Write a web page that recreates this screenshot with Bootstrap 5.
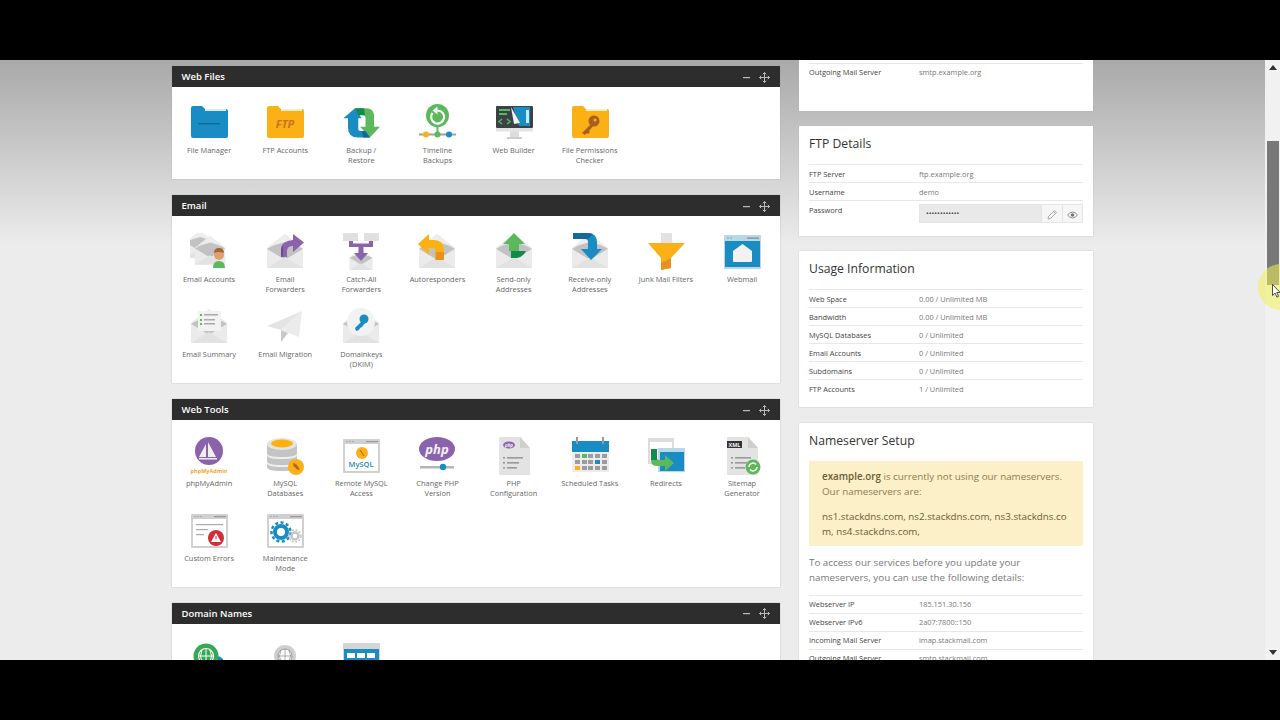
<!DOCTYPE html>
<html lang="en">
  <head>
    <meta charset="UTF-8" />
    <meta name="viewport" content="width=device-width, initial-scale=1.0" />
    <title>Control Panel</title>
    <link href="https://cdn.jsdelivr.net/npm/bootstrap@5.3.0/dist/css/bootstrap.min.css" rel="stylesheet" />
    <style>
      html, body { height: 100%; overflow: hidden; background: #000; }
      body { font-family: "Open Sans", "Liberation Sans", sans-serif; }
      .stage {
        height: 600px;
        margin-top: 60px;
        overflow: hidden;
        position: relative;
        background: linear-gradient(#a9a9a9 0, #ececec 185px, #ececec 100%);
      }
      .left-col { width: 608px; margin-left: 172px; padding-top: 6px; }
      .right-col { width: 294px; margin-left: 19px; }
      .panel { border: 0; border-radius: 0; margin-bottom: 16px; box-shadow: 0 0 1px #999; }
      .panel .card-header {
        height: 21px;
        padding: 1px 10px 0 9.5px;
        background: #2d2d2d;
        border: 0;
        border-radius: 0;
        color: #fff;
        font-size: 9.5px;
        font-weight: 600;
      }
      .tool-grid {
        display: grid;
        grid-template-columns: repeat(8, 76.15px);
        row-gap: 13.5px;
        margin-left: -1px;
        padding: 17px 0 14.3px;
      }
      .tool { height: 61px; color: #666; font-size: 7.4px; line-height: 10px; }
      .tool svg { display: block; width: 38px; height: 38px; margin: 0 auto 3px; }
      .side { border: 0; border-radius: 0; margin-bottom: 15px; box-shadow: 0 0 1px #aaa; padding: 9px 10px 0; }
      .side h5 { font-size: 12.2px; line-height: 17px; font-weight: 400; color: #333; margin: 0 0 12.5px; }
      .info { margin: 0; font-size: 7.4px; line-height: 10px; table-layout: fixed; }
      .info td { padding: 3.2px 0 3.8px; border-top: 1px solid #e8e8e8; border-bottom: 0; background: transparent; box-shadow: none; }
      .info td:first-child { width: 110px; color: #444; }
      .info td:last-child { color: #777; }
      .first-side { margin-top: -1px; padding-bottom: 30px; }
      .first-side .info { margin-top: 4px; }
      .usage-side { padding-bottom: 9.5px; margin-bottom: 16px; }
      .info td.pass-cell { padding: 2.5px 0 13px; }
      .pass { height: 19px; flex-wrap: nowrap; }
      .pass .form-control {
        height: 19px;
        min-height: 0;
        padding: 0 6px;
        font-size: 7.4px;
        border-radius: 0;
        border-color: #e4e4e4;
        background: #e9e9e9;
        color: #444;
      }
      .pass .btn {
        width: 21.5px;
        height: 19px;
        padding: 0;
        border-radius: 0;
        border-color: #e4e4e4;
        background: #f6f6f6;
        line-height: 1;
      }
      .ns-alert {
        margin: 0 0 8.5px;
        padding: 7.5px 13px;
        border: 0;
        border-radius: 1px;
        background: #fcf0c9;
        color: #8d7a52;
        font-size: 9.8px;
        line-height: 15px;
      }
      .ns-alert b { font-weight: 600; color: #6b5a36; }
      .ns-list { word-break: break-all; color: #6b5a36; margin: 10px 0 0; }
      .ns-note { color: #777; font-size: 9.8px; line-height: 15px; margin: 0 0 10px; }
      .scrollbar { position: absolute; top: 0; right: 0; bottom: 0; width: 15px; background: #f1f1f1; }
      .scroll-thumb { margin: 81px 1px 0 2px; height: 144px; background: #787878; }
      .scroll-up, .scroll-down { position: absolute; left: 4px; width: 0; height: 0; border-left: 4px solid transparent; border-right: 4px solid transparent; }
      .scroll-up { top: 5px; border-bottom: 5px solid #333; }
      .scroll-down { bottom: 5px; border-top: 5px solid #333; }
      .cursor-glow { position: absolute; left: 1258px; top: 204px; width: 46px; height: 46px; border-radius: 50%; background: rgba(240, 240, 90, 0.55); }
      .cursor { position: absolute; left: 1272px; top: 224px; width: 9px; height: 14px; }
      .ico-text { font-family: "Open Sans", "Liberation Sans", sans-serif; }
    </style>
  </head>
  <body>
    <svg width="0" height="0" class="position-absolute">
      <defs>
        <symbol id="env" viewBox="0 0 38 38">
          <polygon points="1,15 19,1 37,15 37,35 1,35" fill="#e8e8e8" />
          <polygon points="1,16 19,6 37,16 19,27" fill="#c2c2c2" />
          <polygon points="5,13 19,2 33,13 19,9" fill="#eeeeee" />
          <polygon points="1,16 19,27 37,16 37,35 1,35" fill="#ebebeb" />
          <polygon points="1,35 19,24 37,35" fill="#e2e2e2" />
        </symbol>
        <symbol id="win" viewBox="0 0 38 38">
          <rect x="1" y="2" width="37" height="34" rx="1" fill="#d0d0d0" />
          <rect x="3" y="7" width="33" height="27" fill="#fff" />
          <circle cx="5" cy="4.500" r=".7" fill="#999" /><circle cx="8" cy="4.500" r=".7" fill="#999" /><circle cx="11" cy="4.500" r=".7" fill="#999" />
          <rect x="24" y="4" width="12" height="1.200" fill="#999" />
        </symbol>
        <symbol id="doc" viewBox="0 0 38 38">
          <polygon points="4,0 25,0 35,11 35,38 4,38" fill="#e3e3e3" />
          <polygon points="25,0 35,11 25,11" fill="#cfcfcf" />
          <g fill="#999"><rect x="8" y="20" width="2" height="1.600" /><rect x="12" y="20" width="16" height="1.600" /><rect x="8" y="25" width="2" height="1.600" /><rect x="12" y="25" width="12" height="1.600" /><rect x="8" y="30" width="2" height="1.600" /><rect x="12" y="30" width="10" height="1.600" /></g>
        </symbol>
        <symbol id="panel-tools" viewBox="0 0 31 11">
          <rect x="4" y="5" width="7" height="1.200" fill="#bbb" />
          <path d="M20.500 5.500h10M25.500.5v10M23.800 2.200l1.700-1.700 1.700 1.700M23.800 8.800l1.700 1.700 1.700-1.700M22.200 3.800l-1.700 1.700 1.700 1.700M28.800 3.800l1.700 1.700-1.700 1.700" stroke="#bbb" stroke-width="1" fill="none" />
        </symbol>
      </defs>
    </svg>

    <div class="stage d-flex">
      <div class="left-col flex-shrink-0">

        <div class="card panel">
          <div class="card-header d-flex align-items-center justify-content-between">
            <span>Web Files</span>
            <svg width="31" height="11"><use href="#panel-tools" /></svg>
          </div>
          <div class="card-body p-0 bg-white">
            <div class="tool-grid">
              <div class="tool text-center">
                <svg viewBox="0 0 38 38"><path d="M1 4q0-2 2-2h9l3 3h21q2 0 2 2v25q0 2-2 2H3q-2 0-2-2z" fill="#1a8cc4" /><rect x="15" y="5" width="21" height="2" fill="#d8ecf6" /><rect x="8" y="19" width="22" height="1.400" fill="#12688f" /></svg>
                File Manager
              </div>
              <div class="tool text-center">
                <svg viewBox="0 0 38 38"><path d="M1 4q0-2 2-2h9l3 3h21q2 0 2 2v25q0 2-2 2H3q-2 0-2-2z" fill="#fbb116" /><rect x="15" y="5" width="21" height="2" fill="#fdeec8" /><text class="ico-text" x="19" y="24" text-anchor="middle" font-size="11" font-weight="700" font-style="italic" fill="#c4741c">FTP</text></svg>
                FTP Accounts
              </div>
              <div class="tool text-center">
                <svg viewBox="0 0 38 38"><path d="M1.300 14.300L13 4.300l6.700 10h-3.400V25q0 2 3 2H28v6.500H16q-10 0-10-10V14.300z" fill="#1a8cc4" /><path d="M13 4.300h11q8 0 8 8v10.400h6L28 33.300 18 22.700h5.500V14q0-3-3-3H16z" fill="#5cb85c" /><path d="M13 4.300h9l1 7h-7z" fill="#128a4c" /><path d="M20 27h3.500L28 33.500h-7z" fill="#136a96" /></svg>
                Backup /<br />Restore
              </div>
              <div class="tool text-center">
                <svg viewBox="0 0 38 38"><circle cx="19.500" cy="11.500" r="11.500" fill="#5cb85c" /><path d="M14.500 9a6.500 6.500 0 1 0 5-2.500" stroke="#fff" stroke-width="2.200" fill="none" /><polygon points="19.500,2.500 19.500,10.500 14.500,6.500" fill="#fff" /><rect x="18.500" y="22" width="2" height="9" fill="#5cb85c" /><rect x="1" y="29.500" width="37" height="2" fill="#a0a0a0" /><circle cx="8" cy="30.500" r="3" fill="#fbb116" /><circle cx="19.500" cy="30.500" r="3" fill="#5cb85c" /><circle cx="31" cy="30.500" r="3" fill="#1a8cc4" /></svg>
                Timeline<br />Backups
              </div>
              <div class="tool text-center">
                <svg viewBox="0 0 38 38"><rect x="15" y="26" width="9" height="8" fill="#ddd" /><rect x="12" y="33" width="15" height="2" fill="#ccc" /><rect x="1" y="2" width="37" height="22" rx="1" fill="#3b4144" /><rect x="1" y="24" width="37" height="3.500" fill="#e4e4e4" /><polygon points="18,3 35,3 35,22 24,22" fill="#1a8cc4" /><polygon points="16,3 25,19 19,20" fill="#f2f2f2" /><rect x="31" y="6" width="3" height="13" fill="#cfe7f3" /><g fill="#5cb85c"><rect x="4" y="5" width="11" height="2" /><rect x="4" y="9" width="8" height="2" /></g><path d="M7 15l-3 2.500 3 2.500M12 15l3 2.500-3 2.500" stroke="#5cb85c" stroke-width="1.500" fill="none" /></svg>
                Web Builder
              </div>
              <div class="tool text-center">
                <svg viewBox="0 0 38 38"><path d="M1 4q0-2 2-2h9l3 3h21q2 0 2 2v25q0 2-2 2H3q-2 0-2-2z" fill="#fbb116" /><rect x="15" y="5" width="21" height="2" fill="#fdeec8" /><circle cx="23" cy="17" r="5.500" fill="#a85f20" /><circle cx="24" cy="16" r="1.500" fill="#fbb116" /><path d="M20 20L11 29l3 2 2-2 1 1 2-2-1-1 4-5z" fill="#a85f20" /></svg>
                File Permissions<br />Checker
              </div>
            </div>
          </div>
        </div>

        <div class="card panel">
          <div class="card-header d-flex align-items-center justify-content-between">
            <span>Email</span>
            <svg width="31" height="11"><use href="#panel-tools" /></svg>
          </div>
          <div class="card-body p-0 bg-white">
            <div class="tool-grid">
              <div class="tool text-center">
                <svg viewBox="0 0 38 38"><use href="#env" x="-5" y="-3" width="30" height="30" /><use href="#env" x="4" y="2" width="32" height="32" /><circle cx="29" cy="22" r="5" fill="#e0a070" /><path d="M24 20q0-5 5-5t5 5q-5-2-10 0z" fill="#a2682f" /><path d="M23 35q0-7 6-7t6 7z" fill="#5cb85c" /></svg>
                Email Accounts
              </div>
              <div class="tool text-center">
                <svg viewBox="0 0 38 38"><use href="#env" /><path d="M15 24v-7q0-9 12-10V1l11 8.500L27 19v-6q-6 0-6 5v6z" fill="#8b63ad" /><path d="M15 24v-7q0-3 2-5v11z" fill="#6c4a8c" /></svg>
                Email<br />Forwarders
              </div>
              <div class="tool text-center">
                <svg viewBox="0 0 38 38"><rect x="1" y="0" width="15" height="8" fill="#e0e0e0" /><rect x="22" y="0" width="15" height="8" fill="#e0e0e0" /><use href="#env" x="7" y="15" width="24" height="24" /><g fill="#8b63ad"><rect x="7" y="8" width="4" height="6" /><rect x="27" y="8" width="4" height="6" /><rect x="7" y="10.500" width="24" height="3.500" /><rect x="16.500" y="14" width="5" height="6" /><polygon points="12,20 26,20 19,28" /></g></svg>
                Catch-All<br />Forwarders
              </div>
              <div class="tool text-center">
                <svg viewBox="0 0 38 38"><use href="#env" /><path d="M0 11L11 1v6h5q10 0 10 10v10h-9V17q0-2-2-2h-4v7z" fill="#fbb116" /><rect x="18" y="19" width="8" height="8" fill="#e8901f" /></svg>
                Autoresponders
              </div>
              <div class="tool text-center">
                <svg viewBox="0 0 38 38"><use href="#env" /><path d="M19 0l11 11h-6v7h-10v-7H8z" fill="#5cb85c" /><path d="M16 18h15q-3 6-9 7h-6z" fill="#128a4c" /></svg>
                Send-only<br />Addresses
              </div>
              <div class="tool text-center">
                <svg viewBox="0 0 38 38"><use href="#env" /><path d="M2 0h14q10 0 10 9v7h5L20 27 10 16h7V9q0-3-3-3H2z" fill="#1a8cc4" /><path d="M2 0h14q3 0 6 1l-5 5H2z" fill="#136a96" /></svg>
                Receive-only<br />Addresses
              </div>
              <div class="tool text-center">
                <svg viewBox="0 0 38 38"><rect x="14" y="0" width="11" height="12" fill="#e2e2e2" /><polygon points="1,10 38,10 24,25 24,35 14,37 14,25" fill="#fbb116" /><polygon points="14,37 24,35 24,25 14,30" fill="#e8901f" /></svg>
                Junk Mail Filters
              </div>
              <div class="tool text-center">
                <svg viewBox="0 0 38 38"><rect x="1" y="2" width="37" height="34" rx="1" fill="#b9d7e5" /><rect x="2" y="8" width="35" height="26" fill="#1a8cc4" /><circle cx="5" cy="5" r=".7" fill="#888" /><circle cx="8" cy="5" r=".7" fill="#888" /><rect x="24" y="4.500" width="12" height="1.200" fill="#888" /><path d="M10 18l9.500-7 9.500 7v10q0 1-1 1H11q-1 0-1-1z" fill="#f2f2f2" /></svg>
                Webmail
              </div>
              <div class="tool text-center">
                <svg viewBox="0 0 38 38"><use href="#env" /><rect x="8" y="3" width="23" height="20" rx="1" fill="#f2f2f2" /><g fill="#5cb85c"><rect x="10" y="6" width="2" height="2" /><rect x="10" y="11" width="2" height="2" /><rect x="10" y="15" width="2" height="2" /></g><g fill="#aaa"><rect x="14" y="6" width="14" height="1.500" /><rect x="14" y="11" width="11" height="1.500" /><rect x="14" y="15" width="11" height="1.500" /></g></svg>
                Email Summary
              </div>
              <div class="tool text-center">
                <svg viewBox="0 0 38 38"><polygon points="1,18 36,3 15,22" fill="#e4e4e4" /><polygon points="36,3 15,22 33,29" fill="#ebebeb" /><polygon points="15,22 15,34 22,25" fill="#c8c8c8" /></svg>
                Email Migration
              </div>
              <div class="tool text-center">
                <svg viewBox="0 0 38 38"><use href="#env" /><circle cx="19" cy="14" r="14" fill="#f2f2f2" /><circle cx="22" cy="11" r="4.500" fill="#1a8cc4" /><path d="M20 13l-7 7 1 3 3-1 1-2 2-1 3-4z" fill="#1a8cc4" /></svg>
                Domainkeys<br />(DKIM)
              </div>
            </div>
          </div>
        </div>

        <div class="card panel">
          <div class="card-header d-flex align-items-center justify-content-between">
            <span>Web Tools</span>
            <svg width="31" height="11"><use href="#panel-tools" /></svg>
          </div>
          <div class="card-body p-0 bg-white">
            <div class="tool-grid">
              <div class="tool text-center">
                <svg viewBox="0 0 38 38"><circle cx="19" cy="14" r="14" fill="#8b63ad" /><path d="M9 20l7-13v13zM18 5l8 15h-8z" fill="#eee" /><rect x="9" y="21" width="18" height="1.500" fill="#eee" /><text class="ico-text" x="19" y="36" text-anchor="middle" font-size="5.500" font-weight="700" fill="#f0a81e">phpMyAdmin</text></svg>
                phpMyAdmin
              </div>
              <div class="tool text-center">
                <svg viewBox="0 0 38 38"><path d="M1 7v23q0 4 15 4t15-4V7z" fill="#c4c4c4" /><path d="M1 16q0 4 15 4t15-4v2q0 4-15 4T1 18zM1 24q0 4 15 4t15-4v2q0 4-15 4T1 26z" fill="#efefef" /><ellipse cx="16" cy="7" rx="15" ry="6" fill="#e4e4e4" /><ellipse cx="16" cy="6.500" rx="11" ry="4" fill="#fbb116" /><circle cx="30" cy="30" r="8" fill="#fbb116" /><path d="M27 26q4 0 7 7-4 0-5-3-2 0-2-4z" fill="#b06a20" /></svg>
                MySQL<br />Databases
              </div>
              <div class="tool text-center">
                <svg viewBox="0 0 38 38"><use href="#win" /><circle cx="20" cy="16" r="6" fill="#fbb116" /><path d="M18 13l4 6" stroke="#a85f20" stroke-width="1" /><text class="ico-text" x="19" y="30" text-anchor="middle" font-size="7.500" font-weight="600" fill="#2f88ad">MySQL</text></svg>
                Remote MySQL<br />Access
              </div>
              <div class="tool text-center">
                <svg viewBox="0 0 38 38"><ellipse cx="19" cy="12" rx="18" ry="12" fill="#8b63ad" /><text class="ico-text" x="19" y="17" text-anchor="middle" font-size="13" font-weight="700" font-style="italic" fill="#f2f2f2">php</text><rect x="2" y="29" width="34" height="2.500" fill="#b5b5b5" /><circle cx="25" cy="30" r="3.200" fill="#1a8cc4" /></svg>
                Change PHP<br />Version
              </div>
              <div class="tool text-center">
                <svg viewBox="0 0 38 38"><use href="#doc" /><ellipse cx="14" cy="8" rx="6" ry="3.500" fill="#8b63ad" /><text class="ico-text" x="14" y="9.800" text-anchor="middle" font-size="4.500" font-weight="700" font-style="italic" fill="#eee">php</text></svg>
                PHP<br />Configuration
              </div>
              <div class="tool text-center">
                <svg viewBox="0 0 38 38"><rect x="1" y="4" width="37" height="31" fill="#ececec" /><rect x="1" y="4" width="37" height="11" fill="#1a8cc4" /><rect x="5" y="0" width="2" height="7" fill="#999" /><rect x="31" y="0" width="2" height="7" fill="#999" /><g fill="#9c9c9c"><rect x="4" y="17" width="5" height="4" /><rect x="17" y="17" width="5" height="4" /><rect x="24" y="17" width="5" height="4" /><rect x="31" y="17" width="5" height="4" /><rect x="4" y="23" width="5" height="4" /><rect x="11" y="23" width="5" height="4" /><rect x="17" y="23" width="5" height="4" /><rect x="31" y="23" width="5" height="4" /><rect x="11" y="29" width="5" height="4" /><rect x="17" y="29" width="5" height="4" /><rect x="24" y="29" width="5" height="4" /><rect x="31" y="29" width="5" height="4" /></g><rect x="11" y="17" width="5" height="4" fill="#5cb85c" /><rect x="24" y="23" width="5" height="4" fill="#1a8cc4" /><rect x="4" y="29" width="5" height="4" fill="#fbb116" /></svg>
                Scheduled Tasks
              </div>
              <div class="tool text-center">
                <svg viewBox="0 0 38 38"><rect x="1" y="1" width="26" height="26" fill="#dcdcdc" /><rect x="3" y="5" width="22" height="20" fill="#fff" /><rect x="11" y="11" width="27" height="24" fill="#b9d7e5" /><rect x="13" y="15" width="24" height="19" fill="#1a8cc4" /><path d="M4 12h6v9q0 2 2 2h6v-5l9 8-9 8v-5h-8q-6 0-6-6z" fill="#5cb85c" /><path d="M4 12h6v11H4z" fill="#128a4c" /></svg>
                Redirects
              </div>
              <div class="tool text-center">
                <svg viewBox="0 0 38 38"><use href="#doc" /><rect x="4" y="4" width="15" height="7" fill="#333" /><text class="ico-text" x="11.500" y="9.800" text-anchor="middle" font-size="5.500" font-weight="700" fill="#f2f2f2">XML</text><circle cx="30" cy="30" r="7.500" fill="#5cb85c" /><path d="M26 30a4 4 0 0 1 7-2.500M34 30a4 4 0 0 1-7 2.500" stroke="#fff" stroke-width="1.500" fill="none" /></svg>
                Sitemap<br />Generator
              </div>
              <div class="tool text-center">
                <svg viewBox="0 0 38 38"><use href="#win" /><g fill="#aaa"><rect x="6" y="12" width="27" height="1.200" /><rect x="6" y="17" width="12" height="1.200" /><rect x="6" y="22" width="8" height="1.200" /></g><circle cx="26" cy="26" r="8" fill="#cf2e3a" /><polygon points="26,21 31,30 21,30" fill="#fff" /><rect x="25.500" y="24" width="1" height="3.500" fill="#cf2e3a" /></svg>
                Custom Errors
              </div>
              <div class="tool text-center">
                <svg viewBox="0 0 38 38"><use href="#win" /><circle cx="15" cy="20" r="6" fill="none" stroke="#1a8cc4" stroke-width="4" /><circle cx="15" cy="20" r="9.500" fill="none" stroke="#1a8cc4" stroke-width="2.500" stroke-dasharray="3 2.500" /><circle cx="29" cy="24" r="3.500" fill="none" stroke="#c4c4c4" stroke-width="2.500" /><circle cx="29" cy="24" r="6" fill="none" stroke="#c4c4c4" stroke-width="1.500" stroke-dasharray="2 1.500" /></svg>
                Maintenance<br />Mode
              </div>
            </div>
          </div>
        </div>

        <div class="card panel">
          <div class="card-header d-flex align-items-center justify-content-between">
            <span>Domain Names</span>
            <svg width="31" height="11"><use href="#panel-tools" /></svg>
          </div>
          <div class="card-body p-0 bg-white">
            <div class="tool-grid">
              <div class="tool text-center">
                <svg viewBox="0 0 38 38"><circle cx="27" cy="22" r="7" fill="#1a8cc4" /><circle cx="16" cy="15" r="12.500" fill="#35a853" /><circle cx="16" cy="15" r="7.500" fill="none" stroke="#fff" stroke-width="1.200" /><path d="M8.500 15h15M16 7.500v15M12 9q-3 6 0 12M20 9q3 6 0 12" stroke="#fff" stroke-width="1" fill="none" /></svg>
              </div>
              <div class="tool text-center">
                <svg viewBox="0 0 38 38"><circle cx="19" cy="15" r="11" fill="#cfcfcf" /><circle cx="19" cy="15" r="7" fill="#fff" stroke="#999" /><path d="M12 15h14M19 8v14M15 9q-3 6 0 12M23 9q3 6 0 12" stroke="#999" stroke-width=".8" fill="none" /></svg>
              </div>
              <div class="tool text-center">
                <svg viewBox="0 0 38 38"><rect x="1" y="2" width="37" height="34" fill="#d5d5d5" /><rect x="2" y="8" width="35" height="26" fill="#1a8cc4" /><rect x="5" y="12" width="8" height="5" fill="#fff" /><rect x="15" y="12" width="8" height="5" fill="#fff" /><rect x="25" y="12" width="8" height="5" fill="#fff" /></svg>
              </div>
            </div>
          </div>
        </div>
      </div>

      <div class="right-col flex-shrink-0">
        <div class="card side first-side pt-0">
          <table class="table info">
            <tr><td>Outgoing Mail Server</td><td>smtp.example.org</td></tr>
          </table>
        </div>

        <div class="card side">
          <h5>FTP Details</h5>
          <table class="table info">
            <tr><td>FTP Server</td><td>ftp.example.org</td></tr>
            <tr><td>Username</td><td>demo</td></tr>
            <tr>
              <td class="align-top">Password</td>
              <td class="pass-cell">
                <div class="input-group pass">
                  <input type="password" class="form-control" value="demopassword" readonly />
                  <button class="btn" type="button"><svg width="10" height="10" viewBox="0 0 10 10"><path d="M1 9l.6-2.600L7.400.6l2 2-5.800 5.800zM6.500 1.500l2 2" fill="none" stroke="#888" stroke-width=".7" /></svg></button>
                  <button class="btn" type="button"><svg width="11" height="8" viewBox="0 0 11 8"><path d="M.5 4Q5.500-2 10.500 4 5.500 10 .5 4z" fill="none" stroke="#777" stroke-width=".8" /><circle cx="5.500" cy="4" r="1.800" fill="#777" /></svg></button>
                </div>
              </td>
            </tr>
          </table>
        </div>

        <div class="card side usage-side">
          <h5>Usage Information</h5>
          <table class="table info">
            <tr><td>Web Space</td><td>0.00 / Unlimited MB</td></tr>
            <tr><td>Bandwidth</td><td>0.00 / Unlimited MB</td></tr>
            <tr><td>MySQL Databases</td><td>0 / Unlimited</td></tr>
            <tr><td>Email Accounts</td><td>0 / Unlimited</td></tr>
            <tr><td>Subdomains</td><td>0 / Unlimited</td></tr>
            <tr><td>FTP Accounts</td><td>1 / Unlimited</td></tr>
          </table>
        </div>

        <div class="card side">
          <h5>Nameserver Setup</h5>
          <div class="alert alert-warning ns-alert">
            <b>example.org</b> is currently not using our nameservers.<br />Our nameservers are:
            <p class="ns-list">ns1.stackdns.com, ns2.stackdns.com, ns3.stackdns.com, ns4.stackdns.com,</p>
          </div>
          <p class="ns-note">To access our services before you update your<br />nameservers, you can use the following details:</p>
          <table class="table info">
            <tr><td>Webserver IP</td><td>185.151.30.156</td></tr>
            <tr><td>Webserver IPv6</td><td>2a07:7800::150</td></tr>
            <tr><td>Incoming Mail Server</td><td>imap.stackmail.com</td></tr>
            <tr><td>Outgoing Mail Server</td><td>smtp.stackmail.com</td></tr>
          </table>
        </div>
      </div>

      <div class="scrollbar">
        <div class="scroll-up"></div>
        <div class="scroll-thumb"></div>
        <div class="scroll-down"></div>
      </div>
      <div class="cursor-glow"></div>
      <svg class="cursor" viewBox="0 0 9 14"><path d="M.5.500v11l2.600-2.400 1.800 4 1.700-.8-1.800-3.800h3.400z" fill="#fff" stroke="#222" stroke-width=".8" /></svg>
    </div>

    <script src="https://cdn.jsdelivr.net/npm/bootstrap@5.3.0/dist/js/bootstrap.bundle.min.js"></script>
  </body>
</html>
